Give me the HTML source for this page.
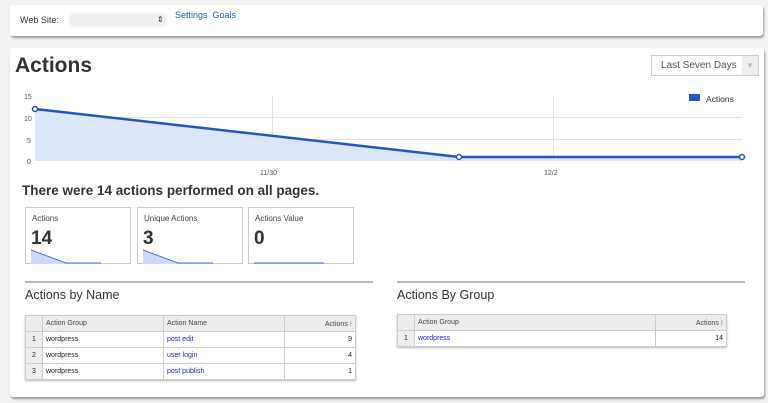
<!DOCTYPE html>
<html><head><style>
*{margin:0;padding:0;box-sizing:border-box}
body{width:768px;height:403px;background:#f2f3f1;font-family:"Liberation Sans",sans-serif;position:relative;overflow:hidden;color:#222}
.a{position:absolute}
.panel{background:#fff;border-radius:3px;box-shadow:1px 2px 2px #999}
a{color:#2a5db0;text-decoration:none}
table{border-collapse:collapse;font-size:7px;position:absolute;border:1px solid #aaa;box-shadow:0 1px 2px #bbb}
td{border:1px solid #ccc;height:16px;padding:0 3px}
tr.h td{background:#ececec;color:#444}
td.n{background:#eee;text-align:center;width:17px}
td.r{text-align:right}
.lk{color:#2222dd}
.box{position:absolute;border:1px solid #ccc;background:#fff;top:207px;width:106px;height:57px}
.box .t{position:absolute;left:6px;top:6px;font-size:8px;color:#444}
.box .v{position:absolute;left:5px;top:20px;font-size:19px;font-weight:bold;color:#333}
</style></head><body>
<div class="a panel" style="left:10px;top:5px;width:753px;height:31px"></div>
<div class="a" style="left:20px;top:15px;font-size:9px;color:#333">Web Site:</div>
<div class="a" style="left:69px;top:13px;width:97px;height:14px;background:#eee;border-radius:4px;filter:blur(1px)"></div>
<div class="a" style="left:157px;top:15px;font-size:8px;color:#333">⇕</div>
<div class="a" style="left:175px;top:10px;font-size:9px"><a>Settings</a>&nbsp; <a>Goals</a></div>

<div class="a panel" style="left:10px;top:48px;width:754px;height:349px"></div>
<div class="a" style="left:15px;top:54px;font-size:21px;font-weight:bold;color:#333">Actions</div>
<div class="a" style="left:651px;top:55px;width:108px;height:21px;border:1px solid #ccc;font-size:10px;color:#555;padding:4px 0 0 9px">Last Seven Days<span style="position:absolute;right:0;top:0;width:16px;height:19px;background:#eee;color:#bbb;font-size:8px;text-align:center;line-height:19px">▼</span></div>

<svg class="a" style="left:0;top:0" width="768" height="200">
<g stroke="#e2e2e2" stroke-width="1"><line x1="35" y1="117.5" x2="742" y2="117.5"/><line x1="35" y1="139.5" x2="742" y2="139.5"/><line x1="272.5" y1="95" x2="272.5" y2="161"/><line x1="553.5" y1="95" x2="553.5" y2="161"/></g>
<polygon points="35,109 459,157 742,157 742,161 35,161" fill="#dbe6fb"/>
<polyline points="35,109 459,157 742,157" fill="none" stroke="#2259c0" stroke-width="2.5"/>
<g fill="#fff" stroke="#2259c0" stroke-width="1.5"><circle cx="35" cy="109" r="2.5"/><circle cx="459" cy="157" r="2.5"/><circle cx="742" cy="157" r="2.5"/></g>
<g font-size="7" fill="#555" font-family="Liberation Sans"><text x="24" y="99">15</text><text x="24" y="121">10</text><text x="27" y="143">5</text><text x="27" y="164">0</text><text x="260" y="175">11/30</text><text x="544" y="175">12/2</text><text x="706" y="102" font-size="8.5" fill="#333">Actions</text></g>
<rect x="689" y="94" width="11" height="7" fill="#2259c0"/>
</svg>

<div class="a" style="left:22px;top:183px;font-size:13.5px;font-weight:bold;color:#333">There were 14 actions performed on all pages.</div>

<div class="box" style="left:25px"><div class="t">Actions</div><div class="v">14</div><svg class="a" style="left:5px;top:41px" width="70" height="15"><polygon points="0,1 35,14 70,14 70,15 0,15" fill="#cdd8fb"/><polyline points="0,1 35,14 70,14" fill="none" stroke="#5566ee"/></svg></div>
<div class="box" style="left:137px"><div class="t">Unique Actions</div><div class="v">3</div><svg class="a" style="left:5px;top:41px" width="70" height="15"><polygon points="0,1 35,14 70,14 70,15 0,15" fill="#cdd8fb"/><polyline points="0,1 35,14 70,14" fill="none" stroke="#5566ee"/></svg></div>
<div class="box" style="left:248px"><div class="t">Actions Value</div><div class="v">0</div><svg class="a" style="left:5px;top:41px" width="70" height="15"><polyline points="0,14 70,14" fill="none" stroke="#5566ee"/></svg></div>

<div class="a" style="left:25px;top:281px;width:348px;height:2px;background:#bbb"></div>
<div class="a" style="left:397px;top:281px;width:348px;height:2px;background:#bbb"></div>
<div class="a" style="left:25px;top:288px;font-size:12.5px;color:#333">Actions by Name</div>
<div class="a" style="left:397px;top:288px;font-size:12.5px;color:#333">Actions By Group</div>

<table style="left:25px;top:315px;width:331px">
<tr class="h"><td class="n"></td><td style="width:121px">Action Group</td><td style="width:121px">Action Name</td><td class="r">Actions ⁝</td></tr>
<tr><td class="n">1</td><td>wordpress</td><td class="lk">post edit</td><td class="r">9</td></tr>
<tr><td class="n">2</td><td>wordpress</td><td class="lk">user login</td><td class="r">4</td></tr>
<tr><td class="n">3</td><td>wordpress</td><td class="lk">post publish</td><td class="r">1</td></tr>
</table>
<table style="left:397px;top:314px;width:330px">
<tr class="h"><td class="n"></td><td style="width:241px">Action Group</td><td class="r">Actions ⁝</td></tr>
<tr><td class="n">1</td><td class="lk">wordpress</td><td class="r">14</td></tr>
</table>
</body></html>
